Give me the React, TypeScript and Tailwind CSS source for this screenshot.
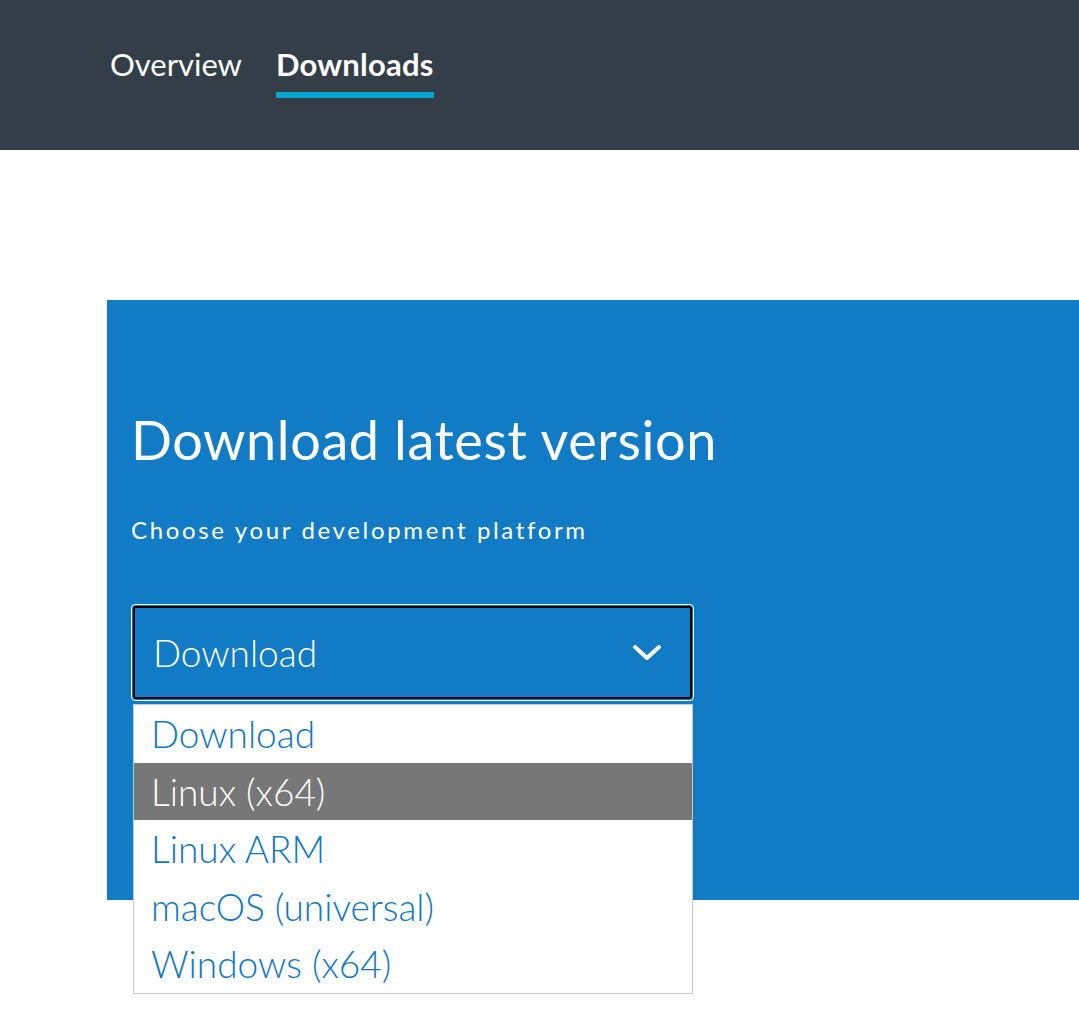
import React, { useState } from 'react';

const platforms = ['Download', 'Linux (x64)', 'Linux ARM', 'macOS (universal)', 'Windows (x64)'];

const App: React.FC = () => {
  const [active] = useState(1);

  return (
    <div className="min-h-screen bg-white font-['Lato',sans-serif] overflow-hidden">
      <header className="h-[150px] bg-[#333e48] pl-[110px] flex items-start">
        <nav className="flex gap-[34px] pt-[44px]">
          <a className="text-white text-[31px] leading-[40px]">Overview</a>
          <a className="text-white text-[31px] leading-[40px] font-bold tracking-[0.2px] flex flex-col">
            Downloads
            <span className="mt-[8px] h-[6px] bg-[#00a5cc] block"></span>
          </a>
        </nav>
      </header>

      <main className="pt-[150px] pl-[107px]">
        <section className="relative h-[600px] bg-[#127bc6] pl-[24px] pt-[110px] text-white">
          <h1 className="text-[54px] leading-[60px] tracking-[0.6px]">Download latest version</h1>
          <p className="mt-[45px] text-[24px] leading-[30px] tracking-[2.65px]">Choose your development platform</p>

          <div className="relative mt-[59px] w-[563px]">
            <div className="h-[97px] rounded-[4px] border border-white p-[1px]">
              <div className="h-full rounded-[3px] border-2 border-black flex items-center justify-between pl-[18px] pr-[28px]">
                <span className="text-[37px] font-light">Download</span>
                <svg width="30" height="18" viewBox="0 0 30 18" fill="none">
                  <path d="M3 3 L15 14 L27 3" stroke="white" strokeWidth="4" strokeLinecap="round" strokeLinejoin="round" />
                </svg>
              </div>
            </div>

            <ul className="absolute left-[2px] top-[100px] w-[560px] bg-white border border-[#c8c8c8]">
              {platforms.map((p, i) => (
                <li
                  key={p}
                  className={`h-[57.5px] flex items-center pl-[17px] text-[37px] font-light ${i === active ? 'bg-[#777777] text-white' : 'text-[#1177c8]'}`}
                >
                  {p}
                </li>
              ))}
            </ul>
          </div>
        </section>
      </main>
    </div>
  );
};

export default App;
